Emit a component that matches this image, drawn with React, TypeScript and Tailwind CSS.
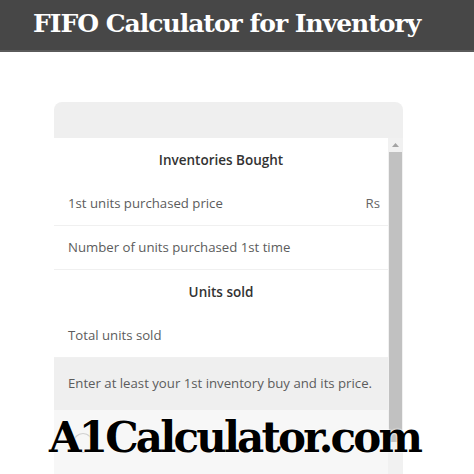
const body = { fontFamily: '"Open Sans", "Noto Sans", sans-serif' };
const slab = { fontFamily: '"DejaVu Serif", "Liberation Serif", serif' };

function Row({ label, suffix }: { label: string; suffix?: string }) {
  return (
    <div className="flex h-[44px] items-center justify-between border-b border-[#f0f0f0] pl-[14px] pr-[8px] text-[13.2px] text-[#5c5c5c]">
      <span>{label}</span>
      {suffix && <span className="text-[#666]">{suffix}</span>}
    </div>
  );
}

function Heading({ children }: { children: string }) {
  return (
    <div className="flex h-[44px] items-center justify-center text-[13.5px] font-semibold text-[#333]">
      {children}
    </div>
  );
}

export default function App() {
  return (
    <div className="relative h-[474px] w-[474px] overflow-hidden bg-white" style={body}>
      <header className="flex h-[52px] items-center border-b-2 border-[#5a5a5a] bg-[#474747] pb-[2px] pl-[33px]">
        <h1 className="text-[25px] font-bold tracking-[-1px] text-white" style={slab}>
          FIFO Calculator for Inventory
        </h1>
      </header>

      <div className="ml-[54px] mt-[50px] w-[349px] overflow-hidden rounded-t-lg bg-[#efefef]">
        <div className="h-[36px]" />
        <div className="flex">
          <div className="w-[334px]">
            <div className="bg-white">
              <Heading>Inventories Bought</Heading>
              <Row label="1st units purchased price" suffix="Rs" />
              <Row label="Number of units purchased 1st time" />
              <Heading>Units sold</Heading>
              <Row label="Total units sold" />
            </div>
            <div className="flex h-[52px] items-center pl-[14px] text-[13.2px] text-[#5c5c5c]">
              Enter at least your 1st inventory buy and its price.
            </div>
            <div className="h-[64px] bg-[#f7f7f7] pl-[18px] pt-[22px]">
              <svg width="22" height="22" viewBox="0 0 22 22">
                <circle cx="11" cy="11" r="9.5" fill="none" stroke="#d0d0d0" strokeWidth="1.2" />
              </svg>
            </div>
          </div>
          <div className="flex w-[15px] flex-col bg-[#f1f1f1]">
            <div className="flex h-[14px] items-center justify-center">
              <svg width="7" height="4" viewBox="0 0 7 4">
                <path d="M0 4 L3.5 0 L7 4 Z" fill="#a3a3a3" />
              </svg>
            </div>
            <div className="mx-[1px] h-[290px] bg-[#c1c1c1]" />
          </div>
        </div>
      </div>

      <div
        className="absolute left-[49px] top-[417px] text-[42px] font-bold leading-none tracking-[-2.8px] text-black"
        style={{ ...slab, textShadow: "0 0 2px #fff, 0 0 2px #fff" }}
      >
        A1Calculator.com
      </div>
    </div>
  );
}
